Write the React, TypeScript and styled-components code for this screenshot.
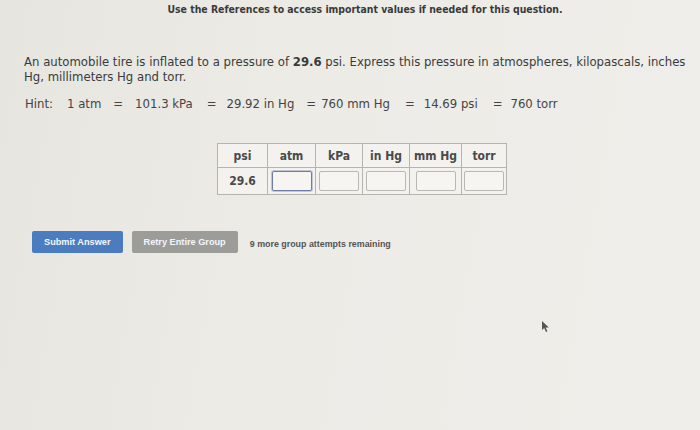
import * as React from 'react';
import styled, { createGlobalStyle } from 'styled-components';

const GlobalStyle = createGlobalStyle`
  html, body {
    margin: 0;
    padding: 0;
  }
  body {
    width: 700px;
    height: 430px;
    overflow: hidden;
    background: linear-gradient(100deg, #e6e5e0 0%, #ecebe6 40%, #efeeea 100%);
    font-family: "DejaVu Sans Condensed", "DejaVu Sans", Verdana, sans-serif;
    font-stretch: condensed;
    color: #333;
  }
`

const Page = styled.div`
  position: relative;
  width: 700px;
  height: 430px;
`

const RefNote = styled.div`
  text-align: center;
  font-size: 10.4px;
  font-weight: bold;
  color: #3a3a3a;
  padding-top: 2px;
  padding-left: 30px;
  line-height: 14px;
`

const Question = styled.p`
  margin: 39px 0 0 24px;
  width: 665px;
  font-size: 13px;
  line-height: 14.5px;
  color: #3b3b3b;
`

const HintRow = styled.div`
  display: flex;
  align-items: baseline;
  margin: 12px 0 0 25px;
  font-size: 13px;
  color: #444;
`

const HintItem = styled.span<{ $gap: number }>`
  margin-right: ${p => p.$gap}px;
`

const TableWrap = styled.div`
  display: flex;
  justify-content: flex-start;
  margin: 32px 0 0 217px;
`

const Table = styled.table`
  border-collapse: collapse;
  background: #f3f2ee;
  font-size: 12px;
  color: #4a4a4a;
`

const Th = styled.th<{ $w: number }>`
  width: ${p => p.$w}px;
  height: 23px;
  padding: 0;
  border: 1px solid #b5b4b0;
  font-weight: bold;
  text-align: center;
`

const Td = styled.td`
  height: 26px;
  padding: 0;
  border: 1px solid #b5b4b0;
  text-align: center;
  font-weight: bold;
`

const Input = styled.div<{ $focus?: boolean }>`
  width: 38px;
  height: 18px;
  margin: 0 auto;
  border: 1px solid ${p => (p.$focus ? '#6f7cab' : '#b9b8b3')};
  border-radius: 2px;
  background: #f6f5f2;
  box-shadow: ${p => (p.$focus ? '0 0 0 1px rgba(100,115,170,0.35)' : 'none')};
`

const Actions = styled.div`
  display: flex;
  align-items: center;
  margin: 36px 0 0 32px;
  gap: 9px;
  font-family: "Liberation Sans", Arial, sans-serif;
  font-stretch: normal;
`

const Button = styled.div<{ $primary?: boolean }>`
  height: 22px;
  padding: 0 12px;
  display: flex;
  align-items: center;
  border-radius: 2px;
  font-size: 9.2px;
  font-weight: bold;
  color: #f4f6fa;
  background: ${p => (p.$primary ? '#4a7cbf' : '#9c9c99')};
`

const Remaining = styled.span`
  margin-left: 3px;
  margin-top: 4px;
  font-size: 8.9px;
  font-weight: bold;
  color: #555;
`

const Cursor = styled.svg`
  position: absolute;
  left: 541px;
  top: 320px;
`

const columns: [string, number][] = [
  ['psi', 49],
  ['atm', 47],
  ['kPa', 46],
  ['in Hg', 46],
  ['mm Hg', 51],
  ['torr', 44],
]

const hints: [string, number][] = [
  ['Hint:', 14],
  ['1 atm', 12],
  ['=', 12],
  ['101.3 kPa', 14],
  ['=', 10],
  ['29.92 in Hg', 12],
  ['=', 5],
  ['760 mm Hg', 15],
  ['=', 9],
  ['14.69 psi', 15],
  ['=', 8],
  ['760 torr', 0],
]

export default function App() {
  return (
    <Page>
      <GlobalStyle />
      <RefNote>Use the References to access important values if needed for this question.</RefNote>
      <Question>
        An automobile tire is inflated to a pressure of <b>29.6</b> psi. Express this pressure in atmospheres, kilopascals, inches Hg, millimeters Hg and torr.
      </Question>
      <HintRow>
        {hints.map(([t, g], i) => (
          <HintItem key={i} $gap={g}>{t}</HintItem>
        ))}
      </HintRow>
      <TableWrap>
        <Table>
          <thead>
            <tr>
              {columns.map(([c, w]) => (
                <Th key={c} $w={w}>{c}</Th>
              ))}
            </tr>
          </thead>
          <tbody>
            <tr>
              <Td>29.6</Td>
              <Td><Input $focus /></Td>
              <Td><Input /></Td>
              <Td><Input /></Td>
              <Td><Input /></Td>
              <Td><Input /></Td>
            </tr>
          </tbody>
        </Table>
      </TableWrap>
      <Actions>
        <Button $primary>Submit Answer</Button>
        <Button>Retry Entire Group</Button>
        <Remaining>9 more group attempts remaining</Remaining>
      </Actions>
      <Cursor width="9" height="13" viewBox="0 0 9 13">
        <path d="M1 1 L1 10 L3.2 8 L5 12 L6.4 11.3 L4.7 7.5 L7.8 7.5 Z" fill="#555" />
      </Cursor>
    </Page>
  )
}
